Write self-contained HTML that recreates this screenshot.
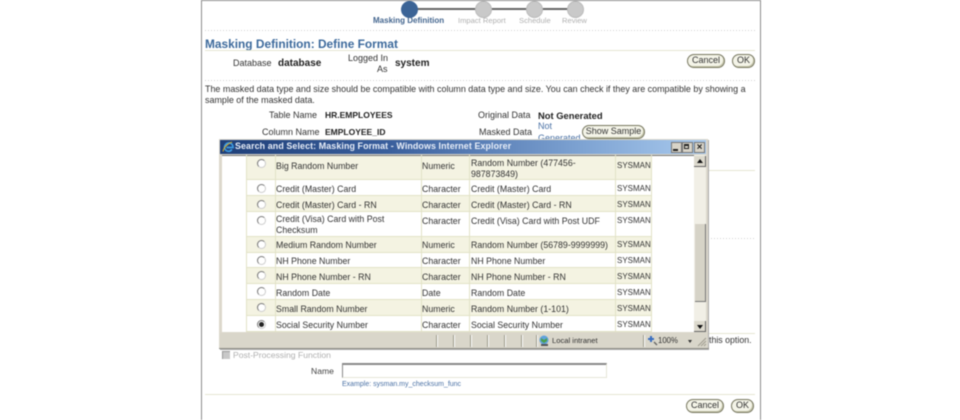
<!DOCTYPE html>
<html><head><meta charset="utf-8"><style>
html,body{margin:0;padding:0;background:#fff}
#p{position:relative;width:960px;height:420px;overflow:hidden;background:#fff;font-family:"Liberation Sans",sans-serif;font-size:9px;color:#333;filter:blur(.4px)}
#p div{position:absolute;white-space:nowrap}
.c{border-radius:50%;width:17px;height:17px;background:#c9c9c9;border:1px solid #bbb;box-sizing:border-box;top:1px}
.s{top:16px;font-size:7.6px;color:#b0b0b0}
.b{font-weight:bold;color:#222}
.btn{border:1px solid #77775f;border-radius:7px;background:#f4f4e8;box-shadow:inset -1px -1px 0 #c4c4aa;height:12px;line-height:11px;text-align:center;font-size:9px;color:#333;box-sizing:content-box}
.dot{height:1px;background:repeating-linear-gradient(90deg,#cfcfcf 0 1px,#fff 1px 3px)}
.r{left:246px;width:405px;box-sizing:border-box}
.o{background:#f4f3e2}
.line{left:246px;width:405px;height:1px;background:#e2e2c6}
.v{width:1px;top:155px;height:177px;background:#e2e2c6}
.rad{left:257px;width:7px;height:7px;border-radius:50%;border:1px solid #777;border-right-color:#ccc;border-bottom-color:#ccc;background:#fff}
.t{font-size:8.8px;color:#333;margin-top:1px}
.n{left:276px}.k{left:422px}.f{left:471px}.u{left:617px;font-size:8px;margin-top:1px}
.sb{top:335px;height:12px;width:1px;background:#9c9a8c;box-shadow:1px 0 0 #fff}
</style></head><body><div id="p">
<div style="left:201px;top:0;width:558px;height:420px;border-left:1px solid #8c8c8c;border-right:1px solid #8c8c8c;border-top:1px solid #8c8c8c"></div>

<div style="left:409px;top:8px;width:166px;height:2px;background:#666"></div>
<div class="c" style="left:401px;background:#3c6496;border-color:#3c6496"></div>
<div class="c" style="left:475px"></div>
<div class="c" style="left:526px"></div>
<div class="c" style="left:567px"></div>
<div class="s" style="left:373px;font-weight:bold;color:#44668f;font-size:8px">Masking Definition</div>
<div class="s" style="left:458px">Impact Report</div>
<div class="s" style="left:519px">Schedule</div>
<div class="s" style="left:562px">Review</div>
<div class="dot" style="left:205px;top:30px;width:550px"></div>

<div style="left:205px;top:37px;font-size:11.9px;font-weight:bold;color:#3d6a9c">Masking Definition: Define Format</div>
<div style="left:205px;top:50px;width:550px;height:1px;background:#e6e6d2"></div>

<div style="left:233px;top:58px">Database</div>
<div class="b" style="left:278px;top:58px;font-size:10px">database</div>
<div style="left:348px;top:53px">Logged In</div>
<div style="left:377px;top:64px">As</div>
<div class="b" style="left:395px;top:58px;font-size:10px">system</div>
<div class="btn" style="left:687px;top:54px;width:36px">Cancel</div>
<div class="btn" style="left:732px;top:54px;width:21px">OK</div>
<div class="dot" style="left:205px;top:80px;width:550px"></div>

<div style="left:205px;top:84px;font-size:8.95px;color:#333">The masked data type and size should be compatible with column data type and size. You can check if they are compatible by showing a</div>
<div style="left:205px;top:95px;font-size:8.95px;color:#333">sample of the masked data.</div>

<div style="left:269px;top:110px">Table Name</div>
<div class="b" style="left:325px;top:110px;font-size:8.5px">HR.EMPLOYEES</div>
<div style="left:262px;top:127px">Column Name</div>
<div class="b" style="left:325px;top:127px;font-size:8.5px">EMPLOYEE_ID</div>
<div style="left:478px;top:110px">Original Data</div>
<div class="b" style="left:538px;top:110px;font-size:9.4px">Not Generated</div>
<div style="left:479px;top:127px">Masked Data</div>
<div style="left:538px;top:121px;color:#4a71a5">Not</div>
<div style="left:538px;top:133px;color:#4a71a5">Generated</div>
<div class="btn" style="left:582px;top:125px;width:61px">Show Sample</div>

<div style="left:708px;top:170px;width:47px;height:1px;background:#e6e6d2"></div>
<div class="dot" style="left:708px;top:238px;width:47px"></div>
<div style="left:708px;top:333px;width:47px;height:1px;background:#e6e6d2"></div>
<div style="left:709px;top:335px;font-size:8.8px;color:#333">this option.</div>

<!-- window -->
<div style="left:219px;top:139px;width:489px;height:210px;background:#dcd8cc;box-shadow:1px 1px 0 #aaa"></div>
<div style="left:220px;top:140px;width:486px;height:14px;background:linear-gradient(90deg,#1f3f78 0,#3a5f9d 35%,#7fa4d3 75%,#a9caee 100%)"></div>
<svg style="position:absolute;left:222px;top:141px" width="12" height="12" viewBox="0 0 12 12"><path d="M2.5 7C2.5 4 4.5 2 7 2s4 2 4 4.5H4.5M9.8 8.3C9 9.7 8 10.3 6.8 10.3 4.8 10.3 3 9 2.6 7" fill="none" stroke="#3e9be0" stroke-width="1.7"/><path d="M1 10.5C1.5 7 5 3 10 1" fill="none" stroke="#e6b520" stroke-width=".9"/></svg>
<div style="left:235px;top:141px;font-size:8.9px;font-weight:bold;color:#e8eef8;letter-spacing:.1px">Search and Select: Masking Format - Windows Internet Explorer</div>
<div style="left:671px;top:142px;width:9px;height:9px;background:#d8d4c8;border:1px solid #777"></div>
<div style="left:673px;top:149px;width:5px;height:1.5px;background:#222"></div>
<div style="left:682px;top:142px;width:9px;height:9px;background:#d8d4c8;border:1px solid #777"></div>
<div style="left:684px;top:144px;width:5px;height:5px;border:1px solid #222;border-top-width:2px;box-sizing:border-box"></div>
<div style="left:694px;top:142px;width:9px;height:9px;background:#d8d4c8;border:1px solid #777;font-size:10px;line-height:9px;text-align:center;color:#222;font-weight:bold">×</div>

<div style="left:222px;top:155px;width:472px;height:177px;background:#fff;border-top:1px solid #777;box-sizing:border-box"></div>
<div style="left:694px;top:155px;width:12px;height:177px;background:#f1efe6"></div>
<div style="left:695px;top:224px;width:11px;height:78px;background:#d6d3c7;border-right:1px solid #777;border-bottom:1px solid #777;box-sizing:border-box"></div>
<div style="left:694px;top:156px;width:12px;height:11px;background:#dcd9cd;border-right:1px solid #666;border-bottom:1px solid #666;box-sizing:border-box"></div>
<div style="left:697px;top:159px;width:0;height:0;border:3px solid transparent;border-bottom:4px solid #111;border-top:0"></div>
<div style="left:694px;top:321px;width:12px;height:11px;background:#dcd9cd;border-right:1px solid #666;border-bottom:1px solid #666;box-sizing:border-box"></div>
<div style="left:697px;top:325px;width:0;height:0;border:3px solid transparent;border-top:4px solid #111;border-bottom:0"></div>

<!-- rows -->
<div class="r o" style="top:156px;height:24px"></div>
<div class="r o" style="top:196px;height:16px"></div>
<div class="r o" style="top:237px;height:16px"></div>
<div class="r o" style="top:268px;height:16px"></div>
<div class="r o" style="top:300px;height:16px"></div>
<div class="line" style="top:179px"></div><div class="line" style="top:195px"></div><div class="line" style="top:211px"></div><div class="line" style="top:236px"></div><div class="line" style="top:252px"></div><div class="line" style="top:267px"></div><div class="line" style="top:283px"></div><div class="line" style="top:299px"></div><div class="line" style="top:315px"></div><div class="line" style="top:331px"></div>
<div class="v" style="left:246px"></div><div class="v" style="left:275px"></div><div class="v" style="left:421px"></div><div class="v" style="left:469px"></div><div class="v" style="left:615px"></div><div class="v" style="left:651px"></div>

<div class="rad" style="top:159px"></div><div class="rad" style="top:184px"></div><div class="rad" style="top:200px"></div><div class="rad" style="top:216px"></div><div class="rad" style="top:240px"></div><div class="rad" style="top:256px"></div><div class="rad" style="top:271px"></div><div class="rad" style="top:287px"></div><div class="rad" style="top:303px"></div><div class="rad" style="top:320px"></div>
<div style="left:259px;top:322px;width:5px;height:5px;border-radius:50%;background:#222"></div>

<div class="t n" style="top:160px">Big Random Number</div><div class="t k" style="top:160px">Numeric</div><div class="t f" style="top:157px">Random Number (477456-</div><div class="t f" style="top:168px">987873849)</div><div class="t u" style="top:160px">SYSMAN</div>
<div class="t n" style="top:183px">Credit (Master) Card</div><div class="t k" style="top:183px">Character</div><div class="t f" style="top:183px">Credit (Master) Card</div><div class="t u" style="top:183px">SYSMAN</div>
<div class="t n" style="top:199px">Credit (Master) Card - RN</div><div class="t k" style="top:199px">Character</div><div class="t f" style="top:199px">Credit (Master) Card - RN</div><div class="t u" style="top:199px">SYSMAN</div>
<div class="t n" style="top:213px">Credit (Visa) Card with Post</div><div class="t n" style="top:224px">Checksum</div><div class="t k" style="top:215px">Character</div><div class="t f" style="top:215px">Credit (Visa) Card with Post UDF</div><div class="t u" style="top:215px">SYSMAN</div>
<div class="t n" style="top:239px">Medium Random Number</div><div class="t k" style="top:239px">Numeric</div><div class="t f" style="top:239px">Random Number (56789-9999999)</div><div class="t u" style="top:239px">SYSMAN</div>
<div class="t n" style="top:255px">NH Phone Number</div><div class="t k" style="top:255px">Character</div><div class="t f" style="top:255px">NH Phone Number</div><div class="t u" style="top:255px">SYSMAN</div>
<div class="t n" style="top:271px">NH Phone Number - RN</div><div class="t k" style="top:271px">Character</div><div class="t f" style="top:271px">NH Phone Number - RN</div><div class="t u" style="top:271px">SYSMAN</div>
<div class="t n" style="top:287px">Random Date</div><div class="t k" style="top:287px">Date</div><div class="t f" style="top:287px">Random Date</div><div class="t u" style="top:287px">SYSMAN</div>
<div class="t n" style="top:303px">Small Random Number</div><div class="t k" style="top:303px">Numeric</div><div class="t f" style="top:303px">Random Number (1-101)</div><div class="t u" style="top:303px">SYSMAN</div>
<div class="t n" style="top:319px">Social Security Number</div><div class="t k" style="top:319px">Character</div><div class="t f" style="top:319px">Social Security Number</div><div class="t u" style="top:319px">SYSMAN</div>

<!-- status bar -->
<div style="left:220px;top:333px;width:487px;height:15px;background:#d9d6ca"></div>
<div style="left:219px;top:348px;width:490px;height:1px;background:#8d8d85"></div>
<div class="sb" style="left:436px"></div><div class="sb" style="left:453px"></div><div class="sb" style="left:470px"></div><div class="sb" style="left:487px"></div><div class="sb" style="left:504px"></div><div class="sb" style="left:521px"></div><div class="sb" style="left:536px"></div><div class="sb" style="left:643px"></div>
<svg style="position:absolute;left:538px;top:335px" width="12" height="12" viewBox="0 0 12 12"><circle cx="6" cy="5" r="4.5" fill="#5fa2dd"/><path d="M3 3l3 2 3-2v3l-3 2-3-2z" fill="#4ba04b"/><rect x="3" y="9" width="7" height="2" fill="#555"/></svg>
<div style="left:552px;top:336px;font-size:7.6px;color:#333">Local intranet</div>
<svg style="position:absolute;left:648px;top:335px" width="10" height="11" viewBox="0 0 10 11"><path d="M3 1v6M0 4h6" stroke="#3a6ec0" stroke-width="2"/><path d="M6 7l3 3" stroke="#666" stroke-width="1.4"/></svg>
<div style="left:658px;top:336px;font-size:7.8px;color:#333">100%</div>
<div style="left:688px;top:340px;width:0;height:0;border:2px solid transparent;border-top:3px solid #333"></div>
<svg style="position:absolute;left:697px;top:337px" width="10" height="10"><path d="M9 1L1 9M9 4L4 9M9 7L7 9" stroke="#a09d90" stroke-width="1"/></svg>

<!-- below -->
<div style="left:222px;top:351px;width:8px;height:8px;background:#c8c8c8;border-top:1px solid #999;border-left:1px solid #999;box-sizing:border-box"></div>
<div style="left:233px;top:350px;color:#b0b0b0;font-size:8.6px">Post-Processing Function</div>
<div style="left:311px;top:366px;color:#444;font-size:8.6px">Name</div>
<div style="left:342px;top:363px;width:265px;height:15px;box-sizing:border-box;border:1px solid #e6e6d8;border-top:2px solid #8a8a8a;border-left:1px solid #8a8a8a;background:#fff"></div>
<div style="left:342px;top:381px;font-size:7px;color:#4a71a5">Example: sysman.my_checksum_func</div>
<div style="left:205px;top:394px;width:550px;height:1px;background:#e6e6d2"></div>
<div class="btn" style="left:686px;top:399px;width:36px">Cancel</div>
<div class="btn" style="left:731px;top:399px;width:21px">OK</div>
</div></body></html>
